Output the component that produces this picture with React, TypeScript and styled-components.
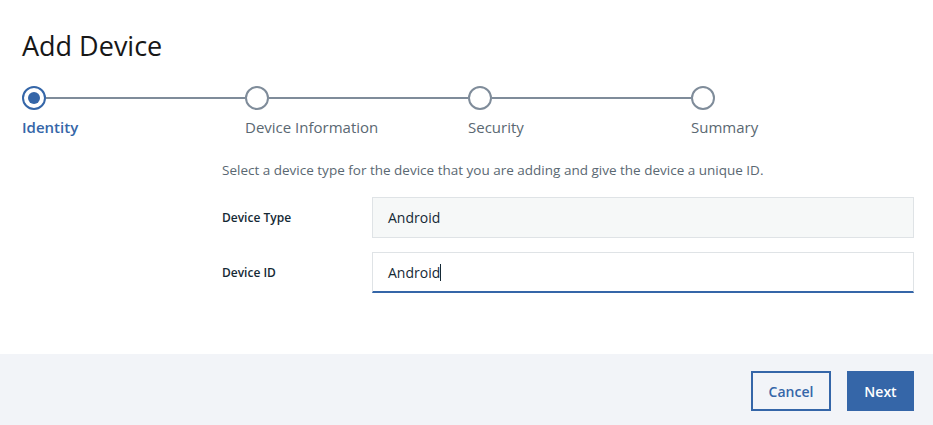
import React from "react";
import styled, { createGlobalStyle } from "styled-components";

const BLUE = "#3566a8";
const FONT = `"Open Sans", "Noto Sans", Arial, sans-serif`;

const Global = createGlobalStyle`
  html, body { margin: 0; padding: 0; background: #fff; }
  body { font-family: ${FONT}; color: #152935; }
  * { box-sizing: border-box; }
`;

const Page = styled.div`
  width: 933px;
  height: 425px;
  display: flex;
  flex-direction: column;
  overflow: hidden;
`;

const Body = styled.div`
  flex: 1;
  padding: 28px 19px 0 22px;
`;

const Title = styled.h1`
  margin: 0;
  font-size: 27px;
  line-height: 36px;
  font-weight: 400;
  color: #171717;
`;

const Steps = styled.div`
  display: grid;
  grid-template-columns: repeat(4, 223px);
  margin-top: 22px;
`;

const Step = styled.div`
  display: flex;
  flex-direction: column;
`;

const Track = styled.div`
  display: flex;
  align-items: center;
  height: 24px;
`;

const Circle = styled.div<{ $active?: boolean }>`
  width: 24px;
  height: 24px;
  border-radius: 50%;
  border: 2px solid ${(p) => (p.$active ? BLUE : "#7f8c9a")};
  display: flex;
  align-items: center;
  justify-content: center;
  flex: none;
  &::after {
    content: "";
    display: ${(p) => (p.$active ? "block" : "none")};
    width: 12px;
    height: 12px;
    border-radius: 50%;
    background: ${BLUE};
  }
`;

const Line = styled.div`
  flex: 1;
  height: 2px;
  background: #7f8c9a;
`;

const StepLabel = styled.div<{ $active?: boolean }>`
  margin-top: 7px;
  font-size: 15px;
  line-height: 20px;
  font-weight: ${(p) => (p.$active ? 600 : 400)};
  color: ${(p) => (p.$active ? BLUE : "#5a6872")};
`;

const Form = styled.div`
  padding-left: 200px;
  margin-top: 23px;
`;

const Description = styled.p`
  margin: 0 0 17px;
  font-size: 13.5px;
  line-height: 20px;
  color: #5a6872;
`;

const Row = styled.div`
  display: grid;
  grid-template-columns: 150px 1fr;
  align-items: center;
  margin-bottom: 14px;
`;

const Label = styled.label`
  font-size: 12px;
  font-weight: 600;
  color: #152935;
`;

const Field = styled.div<{ $focused?: boolean }>`
  height: 41px;
  display: flex;
  align-items: center;
  padding-left: 15px;
  font-size: 14px;
  color: #152935;
  border: 1px solid #dfe3e6;
  background: ${(p) => (p.$focused ? "#fff" : "#f6f8f8")};
  ${(p) => (p.$focused ? `border-bottom: 2px solid ${BLUE};` : "")}
`;

const Caret = styled.span`
  display: inline-block;
  width: 1px;
  height: 17px;
  background: #152935;
  vertical-align: middle;
`;

const Footer = styled.div`
  height: 71px;
  background: #f2f4f8;
  display: flex;
  justify-content: flex-end;
  align-items: flex-start;
  gap: 16px;
  padding: 17px 19px 0 0;
`;

const Button = styled.button<{ $primary?: boolean }>`
  height: 40px;
  width: ${(p) => (p.$primary ? 67 : 80)}px;
  padding: 0;
  font-family: ${FONT};
  font-size: 14px;
  font-weight: 600;
  border: 2px solid ${BLUE};
  background: ${(p) => (p.$primary ? BLUE : "transparent")};
  color: ${(p) => (p.$primary ? "#fff" : BLUE)};
  cursor: pointer;
`;

const steps = ["Identity", "Device Information", "Security", "Summary"];

export default function App() {
  return (
    <Page>
      <Global />
      <Body>
        <Title>Add Device</Title>
        <Steps>
          {steps.map((s, i) => (
            <Step key={s}>
              <Track>
                <Circle $active={i === 0} />
                {i < steps.length - 1 && <Line />}
              </Track>
              <StepLabel $active={i === 0}>{s}</StepLabel>
            </Step>
          ))}
        </Steps>
        <Form>
          <Description>
            Select a device type for the device that you are adding and give the device a unique ID.
          </Description>
          <Row>
            <Label>Device Type</Label>
            <Field>Android</Field>
          </Row>
          <Row>
            <Label>Device ID</Label>
            <Field $focused>
              Android
              <Caret />
            </Field>
          </Row>
        </Form>
      </Body>
      <Footer>
        <Button>Cancel</Button>
        <Button $primary>Next</Button>
      </Footer>
    </Page>
  );
}
